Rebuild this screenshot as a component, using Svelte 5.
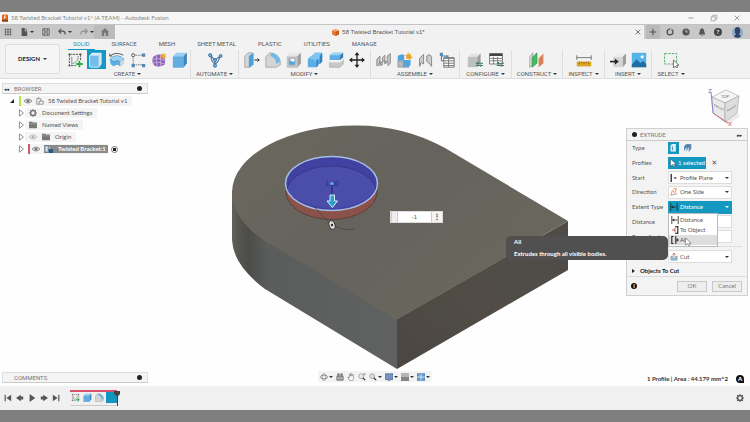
<script>
	const tabs = ['SOLID', 'SURFACE', 'MESH', 'SHEET METAL', 'PLASTIC', 'UTILITIES', 'MANAGE']
	let activeTab = $state('SOLID')

	const groups = [
		{ label: 'CREATE', width: 126, icons: ['sketch', 'extrude', 'revolve', 'pattern', 'form', 'box'] },
		{ label: 'AUTOMATE', width: 48, icons: ['automate'] },
		{ label: 'MODIFY', width: 132, icons: ['presspull', 'fillet', 'shell', 'combine', 'split', 'move'] },
		{ label: 'ASSEMBLE', width: 89, icons: ['joint', 'component', 'link', 'bom'] },
		{ label: 'CONFIGURE', width: 52, icons: ['config', 'table'] },
		{ label: 'CONSTRUCT', width: 51, icons: ['plane'] },
		{ label: 'INSPECT', width: 42, icons: ['measure'] },
		{ label: 'INSERT', width: 47, icons: ['derive', 'picture'] },
		{ label: 'SELECT', width: 38, icons: ['select'] }
	]

	const tree = [
		{ name: 'Document Settings', icon: 'gear' },
		{ name: 'Named Views', icon: 'folder' },
		{ name: 'Origin', icon: 'folder', eye: 'off' }
	]

	const extents = ['Distance', 'To Object', 'All']
	let extent = $state('Distance')
	let value = $state('-1')
</script>

{#snippet cube(x, y, s, top, left, right)}
	<g transform="translate({x} {y}) scale({s})" stroke-linejoin="round">
		<path d="M0 4 4 0H16L12 4Z" fill={top} />
		<path d="M0 4H12V17H0Z" fill={left} />
		<path d="M12 4 16 0V12L12 17Z" fill={right} />
	</g>
{/snippet}

{#snippet glyph(name)}
	<svg class="glyph" viewBox="0 0 20 20" aria-hidden="true" fill="none" stroke-width="1.2">
		{#if name == 'sketch'}
			<path d="M3 3H17M3 3V17H11M17 3V10" stroke="#555" stroke-dasharray="3 1" />
			<path d="M5 15C11 14 14 11 14 5M6 6v8" stroke="#888" />
			<path d="M2 2h2v2H2zM16 2h2v2h-2zM2 16h2v2H2z" fill="#555" />
			<path d="M15.500 11V19M11.500 15H19.500" stroke="#26ab47" stroke-width="2.200" />
		{:else if name == 'extrude'}
			<path d="M2 4 5 1H17L14 4Z" fill="#d7effc" />
			<path d="M14 4 17 1V15L14 19Z" fill="#e8e8e8" />
			<rect x="2" y="4" width="12" height="15" rx="1" fill="#74bce9" stroke="#d3eefb" />
		{:else if name == 'revolve'}
			<path d="M1 9Q10 0 19 9L18 15L14 18Q10 14 6 18L2 15Z" fill="#5aaee2" />
			<path d="M1 9Q10 0 19 9L14 12Q10 9 6 12Z" fill="#9dd3f3" stroke="#4a94c4" stroke-width="0.700" />
			<path d="M1 5Q9 -1 18 4M1 2V5H4" stroke="#555" />
			<path d="M14 12 19 9 18 15 14 18Z" fill="#d9d9d9" />
		{:else if name == 'pattern'}
			<path d="M4 4H16M4 4V16H16" stroke="#777" stroke-dasharray="2 1" />
			<path d="M2 15h4v4H2zM15 15h4v4h-4zM15 2h4v4h-4z" fill="#5189b8" />
			<circle cx="4" cy="4" r="2" fill="#f5f5f5" stroke="#555" />
		{:else if name == 'form'}
			<path d="M3 6Q9 1 15 5Q19 9 17 16Q10 20 4 17Q0 11 3 6Z" fill="#8c63b8" />
			<path d="M2 10Q9 6 17 11M2 14Q9 11 17 15M7 4Q6 12 8 18M12 4Q12 12 12 18" stroke="#c8ace2" />
			<path d="M15 0 16 3 19 2 17.500 5 20 7 17 7 16 10 14 7 11 7 13 5 12 2 14.500 3Z" fill="#f5a623" />
		{:else if name == 'box'}
			{@render cube(1, 1, 1.100, '#9bd0f1', '#61ace0', '#3d86bd')}
		{:else if name == 'automate'}
			<path d="M4 4 10 10 17 5M10 10V17M5 5Q5 12 10 15Q15 12 16 6" stroke="#4b7ea8" stroke-width="1.500" />
			<g fill="#6eb8e8" stroke="#3f6f95"><circle cx="4" cy="4" r="2" /><circle cx="17" cy="5" r="1.800" /><circle cx="10" cy="17" r="2" /><circle cx="10" cy="10" r="1.800" /></g>
		{:else if name == 'presspull'}
			<path d="M1 5 5 1H10V16L8 19H1Z" fill="#d7d7d7" stroke="#8a8a8a" stroke-width="0.800" />
			<path d="M6 5 12 1V16L6 19Z" fill="#4aa1dc" />
			<path d="M13 10H19M17 8l2 2-2 2" stroke="#222" />
		{:else if name == 'fillet'}
			<path d="M1 6 6 1Q17 2 19 11V16L14 19H1Z" fill="#d4d4d4" stroke="#8d8d8d" stroke-width="0.800" />
			<path d="M6 5 9 1Q17 3 19 12L14 15Q14 7 6 5Z" fill="#6fb9e8" />
		{:else if name == 'shell'}
			{@render cube(1, 1, 1.100, '#e8e8e8', '#c4c4c4', '#9e9e9e')}
			<path d="M4 8H11V16H4Z" fill="#fff" stroke="#888" stroke-width="0.700" />
			<path d="M4 16V8L7 12H11V16Z" fill="#4da5dd" />
		{:else if name == 'combine'}
			<path d="M6 5 10 1H19V12L16 15H14V17L12 19H1V9L4 6Z" fill="#5caee5" />
			<path d="M6 5 10 1H19L16 5V9H12L9 12V9H4V6Z" fill="#7fc5f2" />
			<path d="M16 5 19 1V12L16 15ZM12 11 14 9V17L12 19Z" fill="#3582ba" />
		{:else if name == 'split'}
			<path d="M2 4 6 1H19L15 4V10H2Z" fill="#5caee5" />
			<path d="M2 4 6 1H19L15 4Z" fill="#9dd3f3" />
			<path d="M15 4 19 1V7L15 10Z" fill="#367fb5" />
			<path d="M2 13H15L19 9V15L15 19H2Z" fill="#c8c8c8" stroke="#999" stroke-width="0.700" />
			<path d="M2 11H15L19 8V10L15 13H2Z" fill="#f2f2f2" />
		{:else if name == 'move'}
			<path d="M10 2V18M2 10H18" stroke="#222" stroke-width="1.600" />
			<path d="M10 0 13 4H7ZM10 20 7 16H13ZM0 10 4 7V13ZM20 10 16 13V7Z" fill="#222" />
		{:else if name == 'joint'}
			<path d="M1 17V9L5 5V14L8 12V7L11 4V13L14 11V5L18 2V14L15 17V12L11 15V10L8 13V16L5 17V12L3 17Z" fill="#c4c4c4" stroke="#777" stroke-width="0.900" />
		{:else if name == 'component'}
			<path d="M1 11H8V19H1ZM8 12H15V19H8Z" fill="#b8b8b8" stroke="#888" stroke-width="0.700" />
			<path d="M1 5 4 3H9V11H1ZM9 10H17V16L14 19H9Z" fill="#4fa6df" />
			<path d="M14 0 15 3 18 2 17 5 20 7 17 8 16 11 14 8 11 9 12 6 10 4 13 3Z" fill="#eaa724" />
		{:else if name == 'link'}
			<path d="M2 18V8L7 3V15L4 13ZM11 12V5Q16 1 17 8V18L14 14Z" fill="#cfcfcf" stroke="#858585" />
		{:else if name == 'bom'}
			<path d="M6 7H19V19H6Z" fill="#fff" stroke="#777" />
			<path d="M6 8H19M6 11H19M6 14H19M6 17H19M12 7V19" stroke="#777" />
			<path d="M3 3V11H6M3 5H8" stroke="#666" />
			<path d="M1 1h4v4H1zM8 4h4v3H8z" fill="#5191c2" />
		{:else if name == 'config'}
			{@render cube(1, 2, 1, '#e3e3e3', '#bfbfbf', '#9d9d9d')}
			<path d="M11 14H20M11 17H20M13 12.500v3M17 15.500v3" stroke="#3b7774" stroke-width="1.300" />
		{:else if name == 'table'}
			<path d="M2 2H18V15H2Z" fill="#fff" stroke="#777" />
			<path d="M2 2H18V5H2Z" fill="#444" />
			<path d="M3 8H18M3 11H18M7 6V15M12 6V15" stroke="#777" />
			<path d="M11 14H20M11 17H20M13 12.500v3M17 15.500v3" stroke="#3b7774" stroke-width="1.300" />
		{:else if name == 'plane'}
			<path d="M0 7 5 1V17L0 19Z" fill="#d3d3d3" stroke="#888" stroke-width="0.700" />
			<path d="M4 7 10 1V14L4 19Z" fill="#43bd63" stroke="#24893f" stroke-width="0.700" />
			<path d="M12 8 18 2V14L12 19Z" fill="#d78359" />
		{:else if name == 'measure'}
			<path d="M1 7H19M1 4V10M19 4V10" stroke="#777" />
			<path d="M1 12H19V18H1Z" fill="#dba522" />
			<path d="M4 12v3M7 12v2M10 12v3M13 12v2M16 12v3" stroke="#7e5c0f" stroke-width="0.800" />
		{:else if name == 'derive'}
			{@render cube(4, 2, 1, '#eee', '#d5d5d5', '#9d9d9d')}
			<path d="M0 12H7" stroke="#222" stroke-width="2" />
			<path d="M6 8 11 12 6 16Z" fill="#222" />
		{:else if name == 'picture'}
			<path d="M1 1H19V19H1Z" fill="#56b3e8" />
			<path d="M1 16 7 9 12 14 15 11 19 15V19H1Z" fill="#1f6da3" />
			<circle cx="14" cy="6" r="2" fill="#fff" />
		{:else if name == 'select'}
			<path d="M2 2H17V15H2Z" stroke="#4cae67" stroke-dasharray="3 1.500" />
			<path d="M13 10V20L15.500 17.500 17 20 18.500 19 17 16.500H20Z" fill="#fff" stroke="#444" stroke-width="0.900" />
		{/if}
	</svg>
{/snippet}

<!-- small monochrome icons on a 10x10 grid -->
{#snippet mini(name)}
	<svg class="mini" viewBox="0 0 10 10" aria-hidden="true" fill="none" stroke="currentColor" stroke-width="1">
		{#if name == 'apps'}
			<path d="M1 1h2v2H1zM4 1h2v2H4zM7 1h2v2H7zM1 4h2v2H1zM4 4h2v2H4zM7 4h2v2H7zM1 7h2v2H1zM4 7h2v2H4zM7 7h2v2H7z" fill="currentColor" stroke="none" />
		{:else if name == 'file'}
			<path d="M2 0H6V4H9V10H2Z" fill="currentColor" stroke="none" /><path d="M7 0 9 3H7Z" fill="currentColor" stroke="none" />
		{:else if name == 'save'}
			<path d="M1 1H9V9H1ZM3 1V4H7V1M3 9V6H7V9" />
		{:else if name == 'undo'}
			<path d="M4 1 1 4 4 7M1 4H6Q9 4 9 8" stroke-width="1.500" />
		{:else if name == 'redo'}
			<path d="M6 1 9 4 6 7M9 4H4Q1 4 1 8" stroke-width="1.300" />
		{:else if name == 'home'}
			<path d="M0 5 5 0 10 5H9V10H6V6H4V10H1V5Z" fill="currentColor" stroke="none" />
		{:else if name == 'close'}
			<path d="M2 2 8 8M8 2 2 8" />
		{:else if name == 'minimize'}
			<path d="M2 5H8" />
		{:else if name == 'restore'}
			<path d="M1.500 3.500H6.500V8.500H1.500ZM3.500 3V1.500H8.500V6.500H7" stroke-width="0.800" />
		{:else if name == 'plus'}
			<path d="M5 1V9M1 5H9" stroke-width="1.400" />
		{:else if name == 'sync'}
			<circle cx="5" cy="5" r="3.600" stroke-width="1.700" /><path d="M5 3 7 1" stroke="#c8c8c8" stroke-width="1.500" />
		{:else if name == 'clock'}
			<circle cx="5" cy="5" r="4.500" fill="currentColor" stroke="none" /><path d="M5 2V5H7" stroke="#ddd" />
		{:else if name == 'bell'}
			<path d="M5 0Q8 1 8 5L9 8H1L2 5Q2 1 5 0ZM4 9H6V10H4Z" fill="currentColor" stroke="none" />
		{:else if name == 'gear'}
			<circle cx="5" cy="5" r="3" stroke-width="1.800" /><path d="M5 0V2M5 8V10M0 5H2M8 5H10M1.500 1.500 3 3M7 7 8.500 8.500M8.500 1.500 7 3M3 7 1.500 8.500" stroke-width="1.400" />
		{:else if name == 'folder'}
			<path d="M0 1H4L5 2H10V9H0Z" fill="currentColor" stroke="none" /><path d="M0 3.500H10" stroke="#ccc" stroke-width="0.500" />
		{:else if name == 'eye'}
			<path d="M0 5Q5 0 10 5Q5 10 0 5Z" /><circle cx="5" cy="5" r="2" fill="currentColor" stroke="none" />
		{:else if name == 'doc'}
			<path d="M1 2H6V6M1 2V9H4M4 5H9V9H4Z" stroke="#888" /><path d="M3 0V2" />
		{:else if name == 'block'}
			<path d="M0 1H4V9H0Z" fill="#c7e5f8" stroke="#315b7d" stroke-width="0.700" /><path d="M5 5H10V10H5Z" fill="#245b85" stroke="none" /><path d="M4 2 7 5" stroke="#eee" />
		{:else if name == 'closed'}
			<path d="M3 1 8 5 3 9Z" fill="#fff" stroke="#777" />
		{:else if name == 'first'}
			<path d="M1.500 1V9" stroke-width="1.500" /><path d="M9 1V9L3 5Z" fill="currentColor" stroke="none" />
		{:else if name == 'prev'}
			<path d="M6 1V9L0 5ZM6 3h3v4H6z" fill="currentColor" stroke="none" />
		{:else if name == 'play'}
			<path d="M2 0 9 5 2 10Z" fill="currentColor" stroke="none" />
		{:else if name == 'next'}
			<path d="M4 1 10 5 4 9ZM1 3h3v4H1z" fill="currentColor" stroke="none" />
		{:else if name == 'last'}
			<path d="M8.500 1V9" stroke-width="1.500" /><path d="M1 1 7 5 1 9Z" fill="currentColor" stroke="none" />
		{:else if name == 'orbit'}
			<ellipse cx="5" cy="5" rx="4.500" ry="2.300" stroke-width="0.900" /><ellipse cx="5" cy="5" rx="2.300" ry="4.500" stroke-width="0.700" />
		{:else if name == 'look'}
			<path d="M1 4H9V9H1ZM2 4V1H4V4M6 4V1H8V4" fill="#999" /><path d="M1 6.500H9" stroke="#eee" stroke-width="0.600" />
		{:else if name == 'pan'}
			<path d="M3 9 1 5 3 6V2Q4 0 4.500 2V4V1Q5.500 0 6 1V4L7 2Q8 1 8 3V7L7 9.500Z" fill="#fff" stroke-width="0.800" />
		{:else if name == 'zoom'}
			<circle cx="4" cy="4" r="3" fill="#eee" stroke-width="0.700" /><path d="M6 6 9 9" stroke="#222" stroke-width="1.400" /><path d="M8 0V3M6.500 1.500H9.500" stroke-width="0.700" />
		{:else if name == 'fit'}
			<circle cx="4" cy="4" r="3" fill="#ddd" stroke-width="0.700" /><path d="M6 6 9 9" stroke="#222" stroke-width="1.400" />
		{:else if name == 'display'}
			<path d="M0 1H10V8H0Z" fill="#7895c8" stroke="#51698f" /><path d="M3 9.500H7" />
		{:else if name == 'shade'}
			<path d="M0 0H10V10H0Z" fill="#b4b4b4" stroke="none" /><path d="M0 5H10V10H0Z" fill="#858585" stroke="none" />
		{:else if name == 'views'}
			<path d="M0 1H10V9H0Z" fill="#6ca3d9" stroke="#3f6fa5" /><path d="M5 1V9M0 5H10" stroke="#dcebf8" />
		{:else if name == 'cursor'}
			<path d="M2 0V9L4.500 7 6 10 7.500 9 6 6.500H9Z" fill="#fff" stroke="#444" stroke-width="0.600" />
		{:else if name == 'solid'}
			<path d="M1 2 3 0H7V9H1Z" fill="#d8effa" stroke="#fff" stroke-width="0.600" /><path d="M3 3V8M9 1V4M9 6V9" stroke="#2a6f98" />
		{:else if name == 'thin'}
			<path d="M0 3 3 0H9V6L6 10V4L3 9V4L0 9Z" fill="#4f82ae" stroke="#aac8df" stroke-width="0.500" />
		{:else if name == 'profile'}
			<path d="M1.500 0V10" stroke="#222" stroke-width="1.600" /><path d="M5 5H8" stroke="#222" stroke-width="1.400" />
		{:else if name == 'side'}
			<path d="M1 9 3 3 6 6 8 1H4" stroke="#e0803c" /><path d="M1 9 9 7" stroke="#777" stroke-width="0.800" />
		{:else if name == 'distance'}
			<path d="M1 0V10M9 0V10M2 5H8" stroke="#222" /><path d="M1.500 5 4 3V7Z" fill="#222" stroke="none" />
		{:else if name == 'to object'}
			<path d="M8.500 0V10M5 9H8M5 1H8" stroke="#222" stroke-width="1.400" /><path d="M5 2V8M1 5H5" stroke="#c43a3a" />
		{:else if name == 'all'}
			<path d="M3 .5H1V9.500H3M6 0V10" stroke="#222" stroke-width="1.300" /><path d="M6 5H10M8 3V7" stroke="#222" />
		{:else if name == 'cut'}
			<path d="M1 4V9H9V4H7V7H3V4Z" fill="#9cc5e0" stroke="#5683a5" stroke-width="0.600" /><path d="M5 0V6M3 2 5 0 7 2" stroke="#c06060" />
		{/if}
	</svg>
{/snippet}

<main>
	<header class="titlebar">
		<svg class="logo" viewBox="0 0 10 12" aria-hidden="true">
			<rect width="10" height="12" rx="2" fill="#d9661f" />
			<path d="M0 9H10V12H0Z" fill="#8a3a10" />
			<path d="M4 2.500H7M4 2.500V8M4 5H6.500" stroke="#fff" stroke-width="1.200" fill="none" />
		</svg>
		<span>58 Twisted Bracket Tutorial v1* (A TEAM) - Autodesk Fusion</span>
		<div class="window">
			<button aria-label="Minimize">{@render mini('minimize')}</button>
			<button aria-label="Restore">{@render mini('restore')}</button>
			<button aria-label="Close">{@render mini('close')}</button>
		</div>
	</header>

	<div class="docbar">
		<div class="quick">
			<button aria-label="Data panel">{@render mini('apps')}</button>
			<button class="drop" aria-label="File">{@render mini('file')}<i></i></button>
			<button aria-label="Save">{@render mini('save')}</button>
			<button class="drop" aria-label="Undo">{@render mini('undo')}<i></i></button>
			<button class="drop faint" aria-label="Redo">{@render mini('redo')}<i></i></button>
		</div>
		<button class="home" aria-label="Home">{@render mini('home')}</button>
		<div class="doctab">
			<span></span>
			<div class="docname">
				<svg viewBox="0 0 10 10" aria-hidden="true"><path d="M5 0 10 2V8L5 10 0 8V2Z" fill="#e57a36" /><path d="M0 2 5 4 10 2 5 0Z" fill="#f4a66f" /><path d="M5 4 10 2V8L5 10Z" fill="#cc5b19" /></svg>
				58 Twisted Bracket Tutorial v1*
			</div>
			<button aria-label="Close document">{@render mini('close')}</button>
		</div>
		<div class="account">
			<button class="new" aria-label="New design">{@render mini('plus')}</button>
			<button aria-label="Extensions">{@render mini('sync')}</button>
			<button aria-label="Job status">{@render mini('clock')}</button>
			<button aria-label="Notifications">{@render mini('bell')}</button>
			<button class="help" aria-label="Help">?</button>
			<button class="avatar" aria-label="Account">
				<svg viewBox="0 0 12 12" aria-hidden="true"><circle cx="6" cy="6" r="6" fill="#8fa9cc" /><path d="M3 4Q3 0 6 0Q9 0 9 4Q9 7 7.500 8L10 10Q6 13.500 2 10L4.500 8Q3 7 3 4Z" fill="#2d4468" /></svg>
			</button>
		</div>
	</div>

	<section class="ribbon">
		<button class="design">DESIGN<i></i></button>
		<div class="tools">
			<nav>
				{#each tabs as tab}
					<button class:active={tab == activeTab} onclick={() => (activeTab = tab)}>{tab}</button>
				{/each}
			</nav>
			<div class="groups">
				{#each groups as group}
					<div class="group" style="width: {group.width}px">
						<div class="icons">
							{#each group.icons as icon}
								<button class:on={icon == 'extrude'} aria-label={icon}>{@render glyph(icon)}</button>
							{/each}
						</div>
						<button class="label">{group.label}<i></i></button>
					</div>
				{/each}
			</div>
		</div>
	</section>

	<section class="canvas">
		<div class="scene">
			<svg class="model" viewBox="0 79 750 307" role="img" aria-label="Bracket body">
				<defs>
					<linearGradient id="top" x1="0" y1="0" x2="1" y2="0.600">
						<stop offset="0" stop-color="#6b685e" />
						<stop offset="0.500" stop-color="#66635e" />
						<stop offset="1" stop-color="#6a675d" />
					</linearGradient>
					<linearGradient id="round" gradientUnits="userSpaceOnUse" x1="232" y1="0" x2="397" y2="0">
						<stop offset="0" stop-color="#62625c" />
						<stop offset="0.040" stop-color="#55564f" />
						<stop offset="0.100" stop-color="#4c4d4b" />
						<stop offset="0.220" stop-color="#5a5d5b" />
						<stop offset="1" stop-color="#5f6260" />
					</linearGradient>
					<linearGradient id="side" x1="0" y1="1" x2="1" y2="0">
						<stop offset="0" stop-color="#4b4642" />
						<stop offset="0.500" stop-color="#514d46" />
						<stop offset="1" stop-color="#4e4b48" />
					</linearGradient>
				</defs>
				<path d="M232 192V240Q233 265 265 289L397 369V319L265 239Z" fill="url(#round)" />
				<path d="M397 319 568 221V270L397 369Z" fill="url(#side)" />
				<path d="M265 241Q232 219 232 192A123 67 0 0 1 355 125.500Q403 125 445 148L568 221 397 319.500Z" fill="url(#top)" />
				<path d="M286 184V192A45.500 27.500 0 0 0 377 192V184Z" fill="#8a524b" stroke="#4a3735" stroke-width="0.700" />
				<ellipse cx="331.500" cy="183.500" rx="46.500" ry="27" fill="#4041a0" />
				<path d="M287 189A45 27 0 0 1 376 189A46.500 27 0 0 1 287 189Z" fill="#4b4dab" />
				<path d="M287 189A45 27 0 0 1 376 189" fill="none" stroke="#30307c" stroke-width="0.700" />
				<ellipse cx="331.500" cy="183.500" rx="46" ry="27" fill="none" stroke="#a6bde4" stroke-width="1.500" />
				<text x="332" y="186" text-anchor="middle" font-size="7" fill="#2b2b75">1.00</text>
				<path d="M332 184V196" stroke="#202060" stroke-width="1" />
				<circle cx="332" cy="183.500" r="1.800" fill="#5fa5ec" />
				<path d="M330 195H334.500V201H337.500L332.300 207.500 327 201H330Z" fill="#2c9fcb" stroke="#d5eef9" stroke-width="1" />
				<path d="M314 206Q328 224 337 227Q347 231 354 229" fill="none" stroke="#444" stroke-width="0.700" />
				<ellipse cx="332" cy="225" rx="3" ry="4.500" transform="rotate(-15 332 225)" fill="#ddd" stroke="#333" stroke-width="0.900" />
				<circle cx="332" cy="225" r="1.200" fill="#333" />
			</svg>
			<div class="hud">
				<b></b>
				<input bind:value aria-label="Distance" />
				<button aria-label="More">⋮</button>
			</div>
		</div>

		<aside class="left">
			<div>
				<div class="bar"><b class="rewind">◂◂</b>BROWSER<b class="dot"></b></div>
				<ul class="tree">
					<li class="root">
						<b class="open"></b>
						<span class="row green">{@render mini('eye')}{@render mini('doc')}58 Twisted Bracket Tutorial v1</span>
					</li>
					{#each tree as item}
						<li>
							{@render mini('closed')}
							<span class="row">
								{#if item.eye}<span class="off">{@render mini('eye')}</span>{/if}
								{@render mini(item.icon)}{item.name}
							</span>
						</li>
					{/each}
					<li>
						{@render mini('closed')}
						<span class="row red">{@render mini('eye')}<mark>{@render mini('block')}Twisted Bracket:1</mark></span>
						<input type="radio" checked aria-label="Activate component" />
					</li>
				</ul>
			</div>
			<div class="bar">COMMENTS<b class="dot"></b></div>
		</aside>

		<nav class="navbar">
			<button class="drop" aria-label="Orbit">{@render mini('orbit')}<i></i></button>
			<button aria-label="Look at">{@render mini('look')}</button>
			<button aria-label="Pan">{@render mini('pan')}</button>
			<button aria-label="Zoom">{@render mini('zoom')}</button>
			<button class="drop" aria-label="Fit">{@render mini('fit')}<i></i></button>
			<button class="drop" aria-label="Display settings">{@render mini('display')}<i></i></button>
			<button class="drop" aria-label="Grid and snaps">{@render mini('shade')}<i></i></button>
			<button class="drop" aria-label="Viewports">{@render mini('views')}<i></i></button>
		</nav>

		<aside class="right">
			<svg class="viewcube" viewBox="0 0 36 38" aria-hidden="true">
				<path d="M5 25 17 34 29 25 32 28 20 37Z" fill="#ececec" />
				<path d="M4 9 18 2 31 8 17 15Z" fill="#f6f6f6" stroke="#aaa" stroke-width="0.700" />
				<path d="M4 9 17 15V34L5 25Z" fill="#e9e9ea" stroke="#aaa" stroke-width="0.700" />
				<path d="M17 15 31 8 29 25 17 34Z" fill="#dededf" stroke="#aaa" stroke-width="0.700" />
				<path d="M3 4 5 25" stroke="#8588c9" fill="none" /><path d="M5 25 20 35" stroke="#c96b75" fill="none" />
				<g fill="#666" font-size="4">
					<text x="13" y="10">TOP</text>
					<text transform="translate(6 18) skewY(28)" font-size="3">FRONT</text>
					<text transform="translate(19 24) skewY(-30)" font-size="3">RIGHT</text>
				</g>
				<text x="0" y="5" font-size="6" fill="#6c70b5">Z</text>
				<text x="20" y="38" font-size="6" fill="#d2525f">X</text>
			</svg>

			<form class="extrude" onsubmit={(e) => e.preventDefault()}>
				<h2><b class="dot"></b>EXTRUDE<b class="forward">▸▸</b></h2>
				<div class="fields">
					<span>Type</span>
					<div class="types">
						<button type="button" class="picked" aria-label="Extrude">{@render mini('solid')}</button>
						<button type="button" aria-label="Thin extrude">{@render mini('thin')}</button>
					</div>
					<span>Profiles</span>
					<div class="types">
						<button type="button" class="picked chip">{@render mini('cursor')}1 selected</button>
						<button type="button" class="clear" aria-label="Clear">✕</button>
					</div>
					<label for="start">Start</label>
					<div class="pick">{@render mini('profile')}<select id="start"><option>Profile Plane</option></select><i></i></div>
					<label for="direction">Direction</label>
					<div class="pick">{@render mini('side')}<select id="direction"><option>One Side</option></select><i></i></div>
					<label for="extent">Extent Type</label>
					<div class="pick focus">
						{@render mini('distance')}
						<select id="extent" bind:value={extent}>
							{#each extents as name}<option>{name}</option>{/each}
						</select><i></i>
						<div class="menu">
							{#each extents as name}
								<button type="button" class:hover={name == 'All'} onclick={() => (extent = name)}>{@render mini(name.toLowerCase())}{name}</button>
							{/each}
							<span class="pointer">{@render mini('cursor')}</span>
						</div>
					</div>
					<label for="distance">Distance</label>
					<input id="distance" />
					<label for="taper">Taper Angle</label>
					<input id="taper" />
				</div>
				<div class="operation">
					<label for="operation">Operation</label>
					<div class="pick">{@render mini('cut')}<select id="operation"><option>Cut</option></select><i></i></div>
				</div>
				<button type="button" class="objects"><b></b>Objects To Cut</button>
				<footer>
					<b class="info">i</b>
					<button>OK</button>
					<button type="button">Cancel</button>
				</footer>
				<div class="tooltip" role="tooltip">
					<p>All</p>
					<p>Extrudes through all visible bodies.</p>
				</div>
			</form>

			<p class="status">1 Profile | Area : 44.179 mm^2 <b>A</b></p>
		</aside>
	</section>

	<section class="timeline">
		<div class="player">
			{#each ['first', 'prev', 'play', 'next', 'last'] as step}
				<button aria-label={step}>{@render mini(step)}</button>
			{/each}
		</div>
		<div class="track">
			<button aria-label="Sketch feature">{@render glyph('sketch')}</button>
			<button aria-label="Extrude feature">{@render glyph('box')}</button>
			<button aria-label="Fillet feature">{@render glyph('fillet')}</button>
			<button class="current" aria-label="Current feature"></button>
			<span class="marker"></span>
		</div>
		<button class="settings" aria-label="Timeline settings">{@render mini('gear')}</button>
	</section>
</main>

<style>
	:global(body){
		margin: 0;
	}
	main{
		display: flex;
		flex-direction: column;
		min-height: 100vh;
		box-sizing: border-box;
		border: solid #7f7f7f;
		border-width: 12px 0;
		background: #fefefe;
		color: #555;
		font: 6px/8px Lato, "Liberation Sans", sans-serif;
	}
	main :global(*){
		box-sizing: border-box;
	}
	button, input, select{
		margin: 0;
		padding: 0;
		border: 0;
		background: none;
		color: inherit;
		font: inherit;
	}
	button{
		display: flex;
		align-items: center;
		justify-content: center;
	}
	svg{
		display: block;
		flex: none;
	}
	i{
		flex: none;
		width: 0;
		border: 2px solid transparent;
		border-top: 2px solid #333;
		border-bottom: 0;
	}
	.mini{
		width: 8px;
		height: 8px;
	}
	.drop{
		gap: 3px;
	}
	.dot{
		width: 5px;
		height: 5px;
		border-radius: 50%;
		background: #222;
	}

	.titlebar{
		display: flex;
		align-items: center;
		gap: 3px;
		height: 12px;
		padding: 0 9px 0 2px;
		background: #f6f6f6;
		color: #888;
	}
	.logo{
		width: 6px;
		height: 8px;
	}
	.window{
		display: flex;
		gap: 15px;
		margin-left: auto;
		color: #888;
	}

	.docbar{
		display: flex;
		height: 15px;
		border-top: 1px solid #c4c4c4;
		background: #c8c8c8;
		color: #555;
	}
	.quick{
		display: flex;
		align-items: center;
		gap: 8px;
		width: 94px;
		padding-left: 4px;
	}
	.quick .drop{
		gap: 2px;
	}
	.quick .faint{
		color: #888;
	}
	.home{
		width: 21px;
		background: #bbb;
		color: #777;
	}
	.doctab{
		flex: 1;
		display: grid;
		grid-template-columns: 1fr auto 1fr;
		align-items: center;
		padding: 0 2px 0 0;
		background: #f1f1f1;
		font-family: "Liberation Sans", sans-serif;
	}
	.doctab > button{
		justify-self: end;
	}
	.docname{
		display: flex;
		align-items: center;
		gap: 3px;
	}
	.docname svg{
		width: 7px;
		height: 7px;
	}
	.account{
		display: flex;
		align-items: center;
		gap: 8px;
		width: 106px;
		padding: 0 7px 0 2px;
	}
	.new{
		width: 14px;
		height: 14px;
		margin-right: -2px;
		background: #b9b9b9;
	}
	.help{
		width: 8px;
		height: 8px;
		border-radius: 50%;
		background: #444;
		color: #fff;
		font-weight: bold;
	}
	.avatar{
		margin-left: auto;
	}
	.avatar svg{
		width: 11px;
		height: 11px;
	}

	.ribbon{
		display: flex;
		gap: 5px;
		height: 40px;
		padding-left: 5px;
		border-bottom: 1px solid #dcdcdc;
		background: #f2f2f2;
		font-family: Roboto, sans-serif;
	}
	.design{
		gap: 3px;
		width: 55px;
		height: 30px;
		margin-top: 5px;
		border: 1px solid #ddd;
		border-radius: 2px;
		background: #f5f5f5;
		color: #222;
		font-family: Lato, sans-serif;
		font-weight: bold;
	}
	.tools nav{
		display: flex;
		gap: 12px;
		height: 11px;
		padding-left: 3px;
	}
	.tools nav button{
		padding: 0 5px;
		border-bottom: 1px solid transparent;
	}
	.tools nav .active{
		border-bottom: 1px solid #1296bd;
		color: #1296bd;
	}
	.groups{
		display: flex;
	}
	.group{
		border-right: 1px solid #dedede;
	}
	.group:last-child{
		border-right: 0;
	}
	.icons{
		display: flex;
		justify-content: center;
		gap: 2px;
	}
	.icons button{
		width: 19px;
		height: 19px;
	}
	.icons .on{
		background: #1598c6;
	}
	.icons .glyph{
		width: 16px;
		height: 16px;
	}
	.label{
		gap: 2px;
		width: 100%;
		height: 9px;
	}

	.canvas{
		position: relative;
		flex: 1;
		display: grid;
		grid-template-columns: 1fr auto 1fr;
		padding: 3px 2px;
	}
	.scene{
		position: absolute;
		inset: 0;
		font-family: "Liberation Sans", sans-serif;
	}
	.model{
		width: 100%;
		height: 100%;
	}
	.hud{
		position: absolute;
		left: 52%;
		top: 43%;
		display: flex;
		width: 53px;
		height: 12px;
		border: 1px solid #ddd;
		background: #fff;
	}
	.hud b{
		width: 7px;
		border: solid #ccc;
		border-width: 0 1px;
		background: #eee;
	}
	.hud input{
		flex: 1;
		min-width: 0;
		text-align: center;
	}
	.hud button{
		width: 11px;
		border-left: 1px solid #ccc;
		background: #f3f3f3;
		font-size: 8px;
		font-weight: bold;
	}
	.left{
		position: relative;
		display: flex;
		flex-direction: column;
		justify-content: space-between;
		width: 146px;
		padding-top: 1px;
	}
	.bar{
		display: flex;
		align-items: center;
		height: 11px;
		padding: 0 5px 0 11px;
		border: 1px solid #ddd;
		border-bottom: 1px solid #ccc;
		background: #f4f4f4;
		color: #777;
		font-family: Roboto, sans-serif;
	}
	.bar .dot{
		margin-left: auto;
	}
	.rewind, .forward{
		color: #222;
		font: 5px/8px "DejaVu Sans", sans-serif;
	}
	.rewind{
		width: 10px;
		margin-left: -10px;
	}
	.tree{
		margin: 0;
		padding: 1px 0 0 15px;
		list-style: none;
	}
	.tree li{
		display: flex;
		align-items: center;
		height: 12px;
	}
	.tree .root{
		margin-left: -7px;
		gap: 5px;
	}
	.row{
		display: flex;
		align-items: center;
		gap: 5px;
		height: 10px;
		padding: 0 5px 0 4px;
		background: #f4f4f4;
	}
	.tree .mini{
		color: #777;
	}
	.off{
		opacity: .5;
	}
	.green{
		gap: 4px;
		padding-left: 3px;
		border-left: 2px solid #b6e34c;
	}
	.red{
		gap: 4px;
		padding: 0 0 0 2px;
		border-left: 2px solid #d0586f;
		margin: 0 3px;
	}
	mark{
		display: flex;
		align-items: center;
		gap: 5px;
		height: 8px;
		padding: 0 2px 0 1px;
		background: #8a8a8a;
		color: #fff;
		font-weight: bold;
	}
	.open{
		width: 0;
		border-left: 4px solid transparent;
		border-bottom: 4px solid #222;
	}
	.tree input{
		appearance: none;
		width: 7px;
		height: 7px;
		border: 1px solid #777;
		border-radius: 50%;
		background: radial-gradient(#222 40%, #fff 50%);
	}

	.navbar{
		position: relative;
		align-self: end;
		display: flex;
		align-items: center;
		justify-content: center;
		gap: 3px;
		height: 11px;
		margin-bottom: 1px;
		padding: 0 2px;
		background: #f3f3f3;
		color: #777;
	}
	.navbar .drop{
		gap: 1px;
	}

	.right{
		position: relative;
		display: flex;
		flex-direction: column;
		align-items: flex-end;
	}
	.viewcube{
		width: 36px;
		height: 38px;
		margin: 6px 4px 2px;
	}
	.extrude{
		position: relative;
		width: 122px;
		border: 1px solid #d0d0d0;
		background: #f3f3f3;
	}
	.extrude h2{
		display: flex;
		align-items: center;
		gap: 3px;
		height: 12px;
		margin: 0;
		padding: 0 5px;
		border-bottom: 1px solid #ccc;
		color: #777;
		font: 6px/8px Roboto, sans-serif;
	}
	.forward{
		margin-left: auto;
	}
	.fields{
		display: grid;
		grid-template-columns: 36px 64px;
		grid-template-rows: repeat(7, 1fr);
		align-items: center;
		height: 103px;
		padding-left: 5px;
	}
	.fields > input, .pick{
		height: 13px;
		border: 1px solid #ddd;
		background: #fff;
	}
	.types{
		display: flex;
		gap: 3px;
	}
	.types button{
		width: 11px;
		height: 12px;
	}
	.types .picked{
		background: #1598c0;
		color: #fff;
	}
	.types .chip{
		gap: 1px;
		width: 38px;
	}
	.types .clear{
		font: bold 7px/8px "DejaVu Sans", sans-serif;
	}
	.pick{
		position: relative;
		display: flex;
		align-items: center;
		gap: 2px;
		padding: 0 2px 0 1px;
	}
	.pick select{
		flex: 1;
		min-width: 0;
		appearance: none;
	}
	.focus{
		border: 1px solid #1598c0;
		background: #1598c0;
		color: #fff;
	}
	.focus > i{
		border-top-color: #fff;
	}
	.menu{
		position: absolute;
		z-index: 2;
		left: -1px;
		top: 11px;
		width: 50px;
		padding: 1px 0;
		border: 1px solid #bbb;
		background: #fff;
		color: #555;
	}
	.menu button{
		justify-content: flex-start;
		gap: 1px;
		width: 100%;
		height: 10px;
		padding-left: 2px;
	}
	.menu .hover{
		background: #dedede;
	}
	.pointer{
		position: absolute;
		left: 15px;
		top: 24px;
	}
	.operation{
		display: grid;
		grid-template-columns: 36px 64px;
		align-items: center;
		height: 20px;
		margin: 2px 5px 0 0;
		padding-left: 5px;
		border-top: 1px solid #ddd;
	}
	.objects{
		gap: 5px;
		height: 10px;
		padding-left: 5px;
		color: #222;
		font-weight: bold;
	}
	.objects b{
		border: 2px solid transparent;
		border-left: 3px solid #222;
		border-right: 0;
	}
	.extrude footer{
		display: flex;
		align-items: center;
		gap: 5px;
		height: 19px;
		padding: 0 5px 0 4px;
		border-top: 1px solid #ddd;
	}
	.info{
		width: 6px;
		height: 6px;
		margin-right: auto;
		border-radius: 50%;
		background: #111;
		color: #fff;
		line-height: 6px;
		text-align: center;
	}
	footer button{
		width: 30px;
		height: 11px;
		border: 1px solid #c8c8c8;
		background: #eee;
		color: #777;
	}
	.tooltip{
		position: absolute;
		z-index: 1;
		right: 79px;
		top: 107px;
		width: 162px;
		padding: 2px 8px;
		border-radius: 5px;
		background: #505050;
		color: #fff;
		font-weight: bold;
	}
	.tooltip p{
		margin: 0 0 4px;
	}
	.tooltip p:last-child{
		margin: 0;
	}
	.status{
		display: flex;
		align-items: center;
		gap: 8px;
		margin: auto 4px 0 0;
		color: #333;
		font-weight: bold;
	}
	.status b{
		width: 8px;
		height: 8px;
		border-radius: 4px 4px 0 4px;
		background: #111;
		color: #fff;
		text-align: center;
	}

	.timeline{
		display: flex;
		align-items: center;
		height: 24px;
		padding: 0 6px 0 4px;
		background: #f0f0f0;
		color: #555;
	}
	.player{
		display: flex;
		gap: 4px;
		margin-right: 10px;
	}
	.track{
		position: relative;
		display: flex;
		gap: 1px;
		height: 16px;
		border-top: 2px solid #d9506b;
		border-bottom: 1px solid #ccc;
	}
	.track button{
		width: 11px;
		height: 11px;
	}
	.track .glyph{
		width: 9px;
		height: 9px;
	}
	.track .current{
		background: #1295bf;
	}
	.marker{
		position: absolute;
		right: -3px;
		top: -1px;
		width: 6px;
		height: 15px;
		background: #444;
		clip-path: polygon(0 0, 100% 0, 100% 20%, 67% 35%, 67% 100%, 50% 100%, 50% 35%, 0 20%);
	}
	.settings{
		margin-left: auto;
	}
</style>
